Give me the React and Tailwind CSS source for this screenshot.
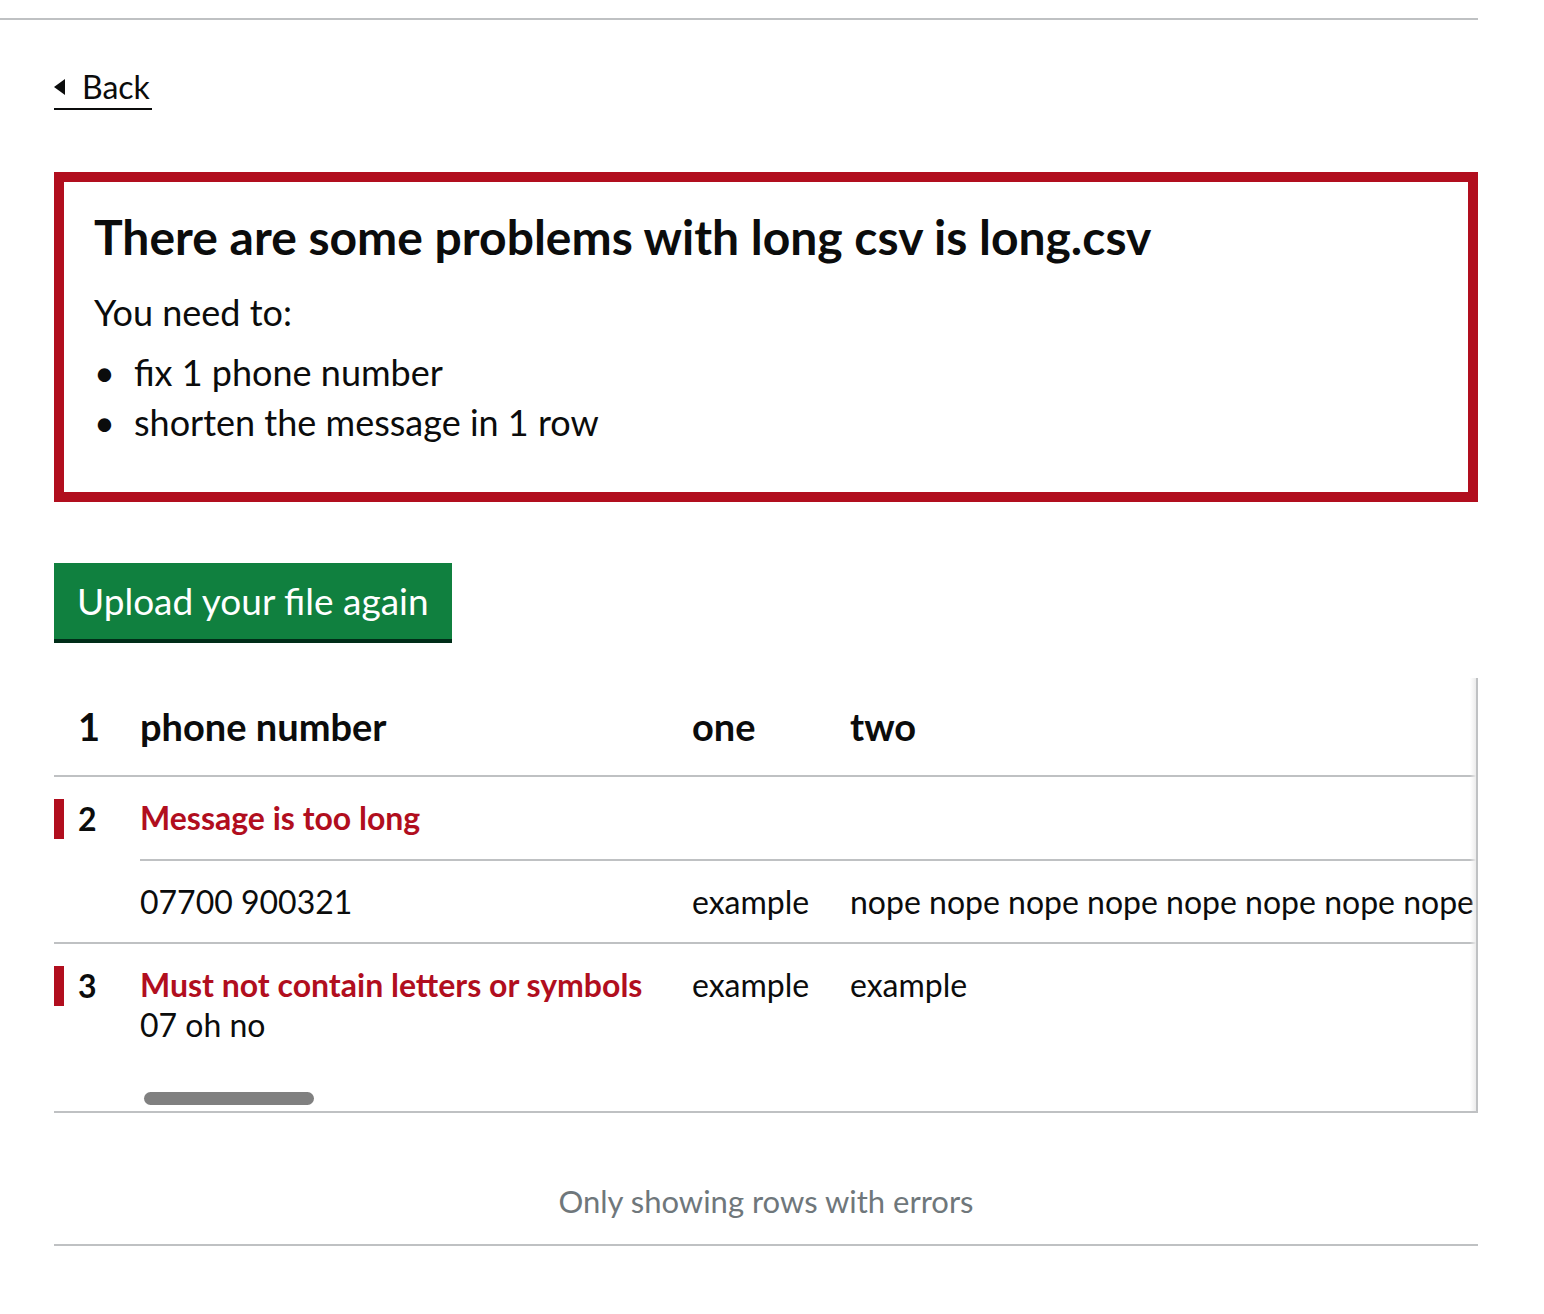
import React from 'react';

const line = 'border-[#bfc1c3]';

const ErrorBar = () => <div className="w-[10px] h-[40px] shrink-0 bg-[#b10e1e]" />;

const App = () => {
    const nope = Array(30).fill('nope').join(' ');
    return (
        <div className="w-[1478px] bg-white text-[#0b0c0c] font-['Lato','Liberation_Sans',sans-serif]">
            <div className={`h-[20px] border-b-2 ${line}`} />

            <div className="pl-[54px]">
                <div className="pt-[46px]">
                    <a href="#" className="inline-flex items-center gap-[17px] border-b-2 border-[#0b0c0c] pr-[2px] text-[32px] leading-[42px] text-[#0b0c0c]">
                        <span className="w-0 h-0 border-y-[8px] border-y-transparent border-r-[11px] border-r-[#0b0c0c]" />
                        <span>Back</span>
                    </a>
                </div>

                <div className="mt-[62px] border-[10px] border-[#b10e1e] pl-[30px] pt-[30px] pb-[45px]">
                    <h2 className="text-[48px] leading-[50px] font-bold">There are some problems with long csv is long.csv</h2>
                    <p className="mt-[25px] text-[36px] leading-[50px]">You need to:</p>
                    <ul className="mt-[10px] text-[36px] leading-[50px]">
                        <li className="flex">
                            <span className="w-[40px]">•</span>
                            <span>fix 1 phone number</span>
                        </li>
                        <li className="flex">
                            <span className="w-[40px]">•</span>
                            <span>shorten the message in 1 row</span>
                        </li>
                    </ul>
                </div>

                <div className="mt-[61px]">
                    <button className="h-[76px] px-[23px] bg-[#10803f] text-white text-[37px] leading-[76px] shadow-[0_4px_0_#002d18]">
                        Upload your file again
                    </button>
                </div>

                <div className="relative mt-[39px] overflow-hidden border-r-2 border-b-2 border-[#bfc1c3] text-[32px]">
                    <div className={`flex h-[99px] items-center border-b-2 ${line} text-[38px] font-bold`}>
                        <div className="w-[86px] pl-[24px]">1</div>
                        <div className="w-[552px]">phone number</div>
                        <div className="w-[158px]">one</div>
                        <div>two</div>
                    </div>

                    <div className={`flex border-b-2 ${line}`}>
                        <div className="w-[86px] flex items-start pt-[22px]">
                            <ErrorBar />
                            <span className="pl-[14px] font-bold leading-[40px]">2</span>
                        </div>
                        <div className="flex-1 min-w-0">
                            <div className={`h-[84px] border-b-2 ${line} pt-[21px] leading-[40px] font-bold text-[#b10e1e]`}>
                                Message is too long
                            </div>
                            <div className="flex h-[81px] items-center whitespace-nowrap">
                                <div className="w-[552px] shrink-0">07700 900321</div>
                                <div className="w-[158px] shrink-0">example</div>
                                <div>{nope}</div>
                            </div>
                        </div>
                    </div>

                    <div className="flex pt-[21px] leading-[40px]">
                        <div className="w-[86px] flex items-start pt-[1px]">
                            <ErrorBar />
                            <span className="pl-[14px] font-bold">3</span>
                        </div>
                        <div className="w-[552px] whitespace-nowrap">
                            <div className="font-bold text-[#b10e1e]">Must not contain letters or symbols</div>
                            <div>07 oh no</div>
                        </div>
                        <div className="w-[158px]">example</div>
                        <div>example</div>
                    </div>

                    <div className="pl-[90px] pt-[47px] pb-[6px]">
                        <div className="w-[170px] h-[13px] rounded-full bg-[#808080]" />
                    </div>

                    <div className="absolute top-0 right-0 h-full w-[6px] bg-gradient-to-r from-transparent to-[#ececec]" />
                </div>

                <p className="mt-[68px] text-center text-[31px] leading-[40px] text-[#6f777b]">Only showing rows with errors</p>

                <div className={`mt-[23px] border-b-2 ${line}`} />
            </div>
        </div>
    );
};

export default App;
